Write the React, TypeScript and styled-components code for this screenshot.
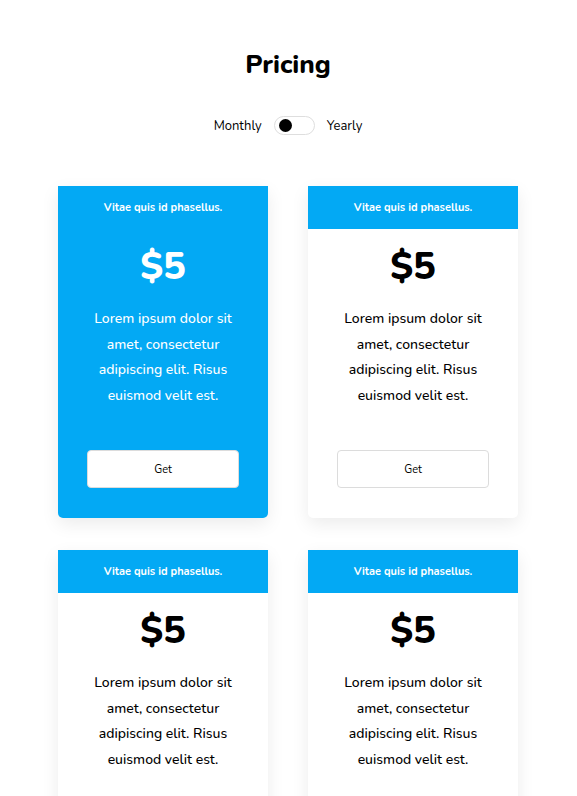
import styled, { createGlobalStyle } from 'styled-components';

const GlobalStyle = createGlobalStyle`
    body {
        margin: 0;
        background: #ffffff;
        font-family: 'Nunito', 'Lato', 'Noto Sans', sans-serif;
        color: #000;
    }
`;

const BLUE = '#03a9f4';

const Page = styled.div`
    display: flex;
    flex-direction: column;
    align-items: center;
    padding-top: 49px;
    padding-right: 1px;
`;
const Title = styled.h1`
    margin: 0;
    font-size: 26px;
    font-weight: 800;
    line-height: 32px;
`;
const ToggleRow = styled.div`
    display: flex;
    align-items: center;
    gap: 12px;
    margin-top: 35px;
    font-size: 13px;
`;
const Switch = styled.div`
    width: 41px;
    height: 19px;
    box-sizing: border-box;
    border: 1px solid #dedede;
    border-radius: 10px;
    display: flex;
    align-items: center;
    padding-left: 4px;
`;
const Knob = styled.span`
    width: 13px;
    height: 13px;
    border-radius: 50%;
    background: #000;
`;
const Grid = styled.div`
    display: grid;
    grid-template-columns: 210px 210px;
    column-gap: 40px;
    row-gap: 32px;
    margin-top: 51px;
`;
const Card = styled.div<{ $active?: boolean }>`
    background: ${p => (p.$active ? BLUE : '#fff')};
    color: ${p => (p.$active ? '#fff' : '#000')};
    border-radius: 0 0 5px 5px;
    box-shadow: 0 6px 18px rgba(0, 0, 0, 0.08);
    display: flex;
    flex-direction: column;
    align-items: center;
    padding-bottom: 30px;
`;
const CardHeader = styled.div`
    align-self: stretch;
    height: 43px;
    background: ${BLUE};
    color: #fff;
    display: flex;
    align-items: center;
    justify-content: center;
    font-size: 11px;
    font-weight: 700;
`;
const Price = styled.div`
    font-size: 38px;
    font-weight: 800;
    line-height: 48px;
    margin-top: 14px;
`;
const Description = styled.p`
    margin: 15px 0 0;
    width: 162px;
    text-align: center;
    font-size: 14px;
    font-weight: 500;
    line-height: 25.5px;
`;
const GetButton = styled.button`
    margin-top: 42px;
    width: 152px;
    height: 38px;
    background: #fff;
    border: 1px solid #dcdcdc;
    border-radius: 4px;
    font-family: inherit;
    font-size: 11px;
    color: #000;
`;

const plans = [true, false, false, false];

export default function App() {
    return (
        <Page>
            <GlobalStyle />
            <Title>Pricing</Title>
            <ToggleRow>
                <span>Monthly</span>
                <Switch>
                    <Knob />
                </Switch>
                <span>Yearly</span>
            </ToggleRow>
            <Grid>
                {plans.map((active, i) => (
                    <Card key={i} $active={active}>
                        <CardHeader>Vitae quis id phasellus.</CardHeader>
                        <Price>$5</Price>
                        <Description>
                            Lorem ipsum dolor sit amet, consectetur adipiscing elit. Risus euismod velit est.
                        </Description>
                        <GetButton>Get</GetButton>
                    </Card>
                ))}
            </Grid>
        </Page>
    );
}
